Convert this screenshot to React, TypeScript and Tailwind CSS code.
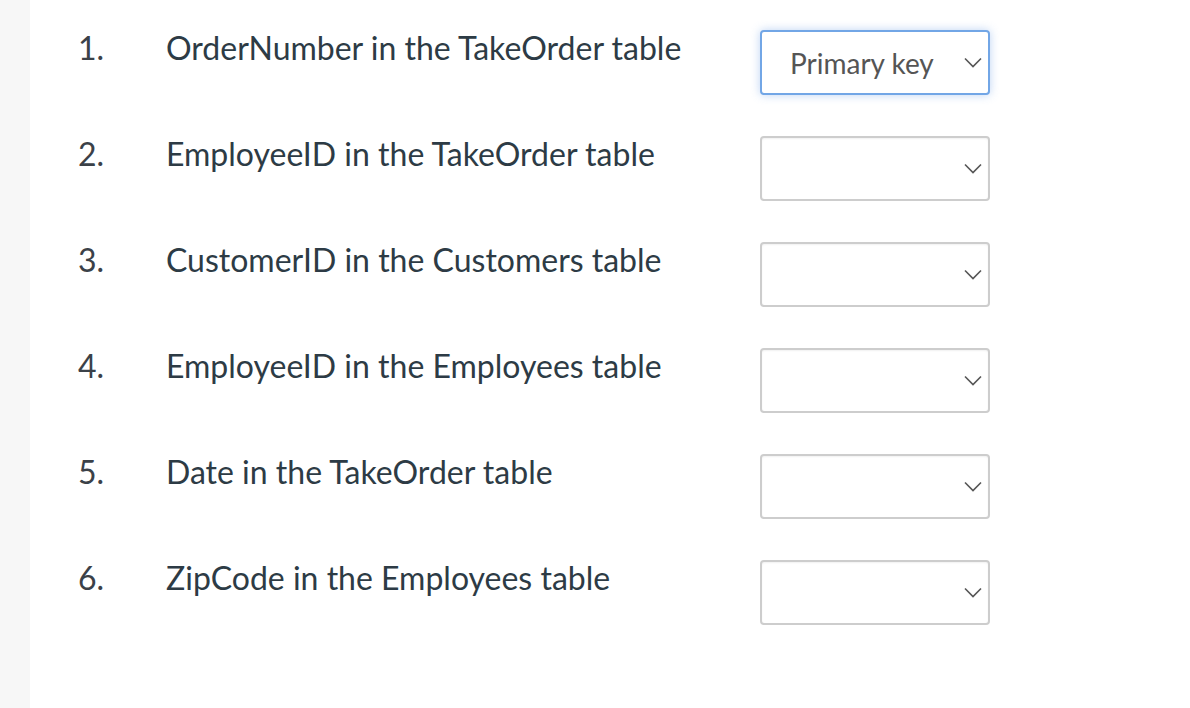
const ROWS = [
  { n: "1.", label: "OrderNumber in the TakeOrder table", value: "Primary key" },
  { n: "2.", label: "EmployeeID in the TakeOrder table", value: "" },
  { n: "3.", label: "CustomerID in the Customers table", value: "" },
  { n: "4.", label: "EmployeeID in the Employees table", value: "" },
  { n: "5.", label: "Date in the TakeOrder table", value: "" },
  { n: "6.", label: "ZipCode in the Employees table", value: "" },
];

function Chevron() {
  return (
    <svg width="18" height="11" viewBox="0 0 18 11" fill="none" className="shrink-0">
      <path d="M1 1.5 L9 9.5 L17 1.5" stroke="#555" strokeWidth="1.6" />
    </svg>
  );
}

function SelectBox({ value }: { value: string }) {
  const focused = value !== "";
  return (
    <div
      className={
        focused
          ? "mt-[30px] flex h-[65px] w-[230px] items-center rounded-[4px] border-2 border-[#72a6e6] bg-white pl-[28px] pr-[6px] shadow-[0_0_10px_rgba(110,160,230,0.45)]"
          : "mt-[30px] flex h-[65px] w-[230px] items-center rounded-[4px] border-2 border-[#cdcdcd] bg-white pl-[28px] pr-[6px] shadow-[inset_0_1px_2px_rgba(0,0,0,0.06)]"
      }
    >
      <span className="flex-1 text-[28px] leading-none text-[#555]">{value}</span>
      <Chevron />
    </div>
  );
}

export default function App() {
  return (
    <div className="flex h-[708px] w-full bg-white font-['Lato',sans-serif]">
      <div className="w-[30px] shrink-0 bg-[#f7f7f7]" />
      <div className="flex flex-col pl-[48px]">
        {ROWS.map((r) => (
          <div key={r.n} className="flex h-[106px] items-start">
            <span className="mt-[32px] w-[88px] text-[32px] leading-none text-[#3b4148]">{r.n}</span>
            <span className="mt-[32px] w-[594px] text-[32px] leading-none text-[#2d3b45]">{r.label}</span>
            <SelectBox value={r.value} />
          </div>
        ))}
      </div>
    </div>
  );
}
